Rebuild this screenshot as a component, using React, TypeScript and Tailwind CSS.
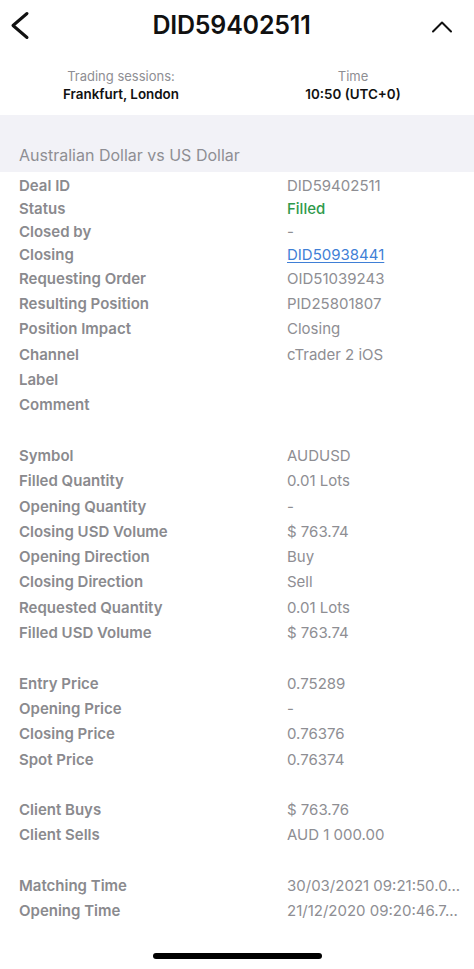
import React from 'react';

type Row = { label: string; value?: string; kind?: 'green' | 'link' };

const groups: Row[][] = [
  [
    { label: 'Requesting Order', value: 'OID51039243' },
    { label: 'Resulting Position', value: 'PID25801807' },
    { label: 'Position Impact', value: 'Closing' },
    { label: 'Channel', value: 'cTrader 2 iOS' },
    { label: 'Label' },
    { label: 'Comment' },
  ],
  [
    { label: 'Symbol', value: 'AUDUSD' },
    { label: 'Filled Quantity', value: '0.01 Lots' },
    { label: 'Opening Quantity', value: '-' },
    { label: 'Closing USD Volume', value: '$ 763.74' },
    { label: 'Opening Direction', value: 'Buy' },
    { label: 'Closing Direction', value: 'Sell' },
    { label: 'Requested Quantity', value: '0.01 Lots' },
    { label: 'Filled USD Volume', value: '$ 763.74' },
  ],
  [
    { label: 'Entry Price', value: '0.75289' },
    { label: 'Opening Price', value: '-' },
    { label: 'Closing Price', value: '0.76376' },
    { label: 'Spot Price', value: '0.76374' },
  ],
  [
    { label: 'Client Buys', value: '$ 763.76' },
    { label: 'Client Sells', value: 'AUD 1 000.00' },
  ],
  [
    // the app cuts these off with an ellipsis
    { label: 'Matching Time', value: '30/03/2021 09:21:50.0...' },
    { label: 'Opening Time', value: '21/12/2020 09:20:46.7...' },
  ],
];

const topRows: Row[] = [
  { label: 'Deal ID', value: 'DID59402511' },
  { label: 'Status', value: 'Filled', kind: 'green' },
  { label: 'Closed by', value: '-' },
  { label: 'Closing', value: 'DID50938441', kind: 'link' },
];

function DetailRow({ row, tall }: { row: Row; tall?: boolean }) {
  const valueClass =
    row.kind === 'green'
      ? 'text-[#2f9a4c] font-medium'
      : row.kind === 'link'
        ? 'text-[#3f7fd6] underline underline-offset-2'
        : 'text-[#8e8e93]';
  return (
    <div className={`flex items-center ${tall ? 'h-[25.3px]' : 'h-[23px]'}`}>
      <span className="w-[268px] shrink-0 text-[15px] font-semibold text-[#8a8a8e]">{row.label}</span>
      <span className={`min-w-0 flex-1 truncate text-[15px] ${valueClass}`}>{row.value}</span>
    </div>
  );
}

export default function App() {
  return (
    <div className="relative h-[969px] w-[474px] overflow-hidden bg-white font-['Inter',sans-serif]">
      <div className="flex h-[52px] items-center justify-between px-[10px]">
        <svg width="22" height="30" viewBox="0 0 22 30">
          <path d="M17 2.5 L3 14.5 L17 26.5" fill="none" stroke="#111" strokeWidth="3" strokeLinecap="round" strokeLinejoin="round" />
        </svg>
        <h1 className="text-[25px] font-semibold tracking-[-0.2px] text-[#111]">DID59402511</h1>
        <svg width="22" height="14" viewBox="0 0 22 14" className="mr-[11px] mt-[2px]">
          <path d="M2 11.5 L11 2.5 L20 11.5" fill="none" stroke="#111" strokeWidth="2" strokeLinecap="round" strokeLinejoin="round" />
        </svg>
      </div>

      <div className="grid grid-cols-2 px-[5px] pt-[15px] text-center text-[13px] leading-[18px]">
        <div>
          <div className="text-[#8e8e93]">Trading sessions:</div>
          <div className="text-[13.4px] font-semibold text-[#111]">Frankfurt, London</div>
        </div>
        <div>
          <div className="text-[#8e8e93]">Time</div>
          <div className="text-[13.4px] font-semibold text-[#111]">10:50 (UTC+0)</div>
        </div>
      </div>

      <div className="mt-[12px] flex h-[57px] items-end bg-[#f2f2f7] px-[19px] pb-[5px]">
        <span className="text-[16px] text-[#8e8e93]">Australian Dollar vs US Dollar</span>
      </div>

      <div className="px-[19px] pr-[10px] pt-[2.5px]">
        {topRows.map((r) => (
          <DetailRow key={r.label} row={r} />
        ))}
        {groups.map((g, i) => (
          <div key={i} className={i > 0 ? 'pt-[25.3px]' : ''}>
            {g.map((r) => (
              <DetailRow key={r.label} row={r} tall />
            ))}
          </div>
        ))}
      </div>

      <div className="absolute bottom-[10px] left-[153px] h-[6px] w-[169px] rounded-full bg-black" />
    </div>
  );
}
